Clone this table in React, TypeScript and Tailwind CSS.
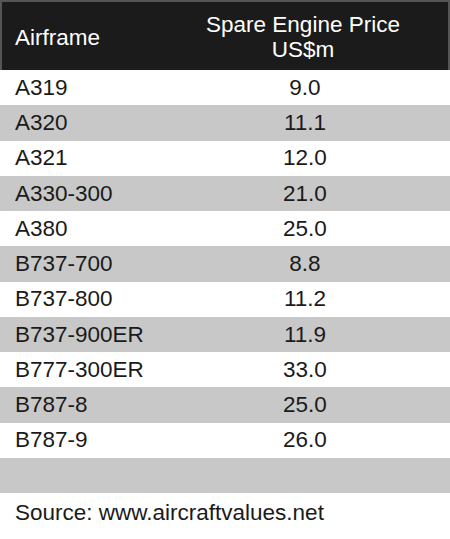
import React from 'react';

const rows: [string, string][] = [
  ['A319', '9.0'],
  ['A320', '11.1'],
  ['A321', '12.0'],
  ['A330-300', '21.0'],
  ['A380', '25.0'],
  ['B737-700', '8.8'],
  ['B737-800', '11.2'],
  ['B737-900ER', '11.9'],
  ['B777-300ER', '33.0'],
  ['B787-8', '25.0'],
  ['B787-9', '26.0'],
  ['', ''],
];

export default function App() {
  return (
    <div className="w-[450px] h-[539px] bg-white text-[#1a1a1a] text-[22.5px] font-['Liberation_Sans',Arial,sans-serif]">
      {/* Header */}
      <div className="h-[70px] flex items-center bg-[#1b1b1b] text-white border-2 border-b-0 border-[#555]">
        <div className="w-[158px] pl-[13px] pt-[3px]">Airframe</div>
        <div className="flex-1 text-center leading-[25px] pr-[2px] pt-[2px]">
          Spare Engine Price
          <br />
          US$m
        </div>
      </div>

      {/* Rows */}
      {rows.map(([name, price], i) => (
        <div
          key={i}
          className={`h-[35.25px] flex items-center ${i % 2 === 1 ? 'bg-[#c8c8c8]' : 'bg-white'}`}
        >
          <div className="w-[160px] pl-[15px]">{name}</div>
          <div className="flex-1 text-center">{price}</div>
        </div>
      ))}

      <div className="pl-[15px] pt-[3px]">Source: www.aircraftvalues.net</div>
    </div>
  );
}
